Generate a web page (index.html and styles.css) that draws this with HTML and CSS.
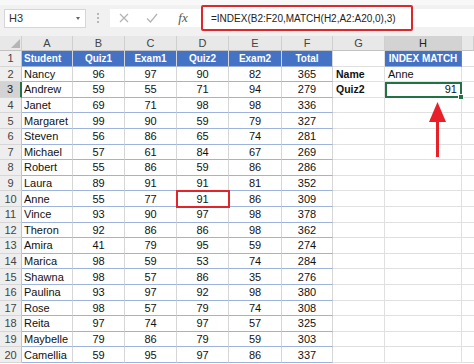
FILE: index.html
```html
<!DOCTYPE html>
<html lang="en">

<head>
    <meta charset="UTF-8">
    <meta name="viewport" content="width=device-width, initial-scale=1.0">
    <title>INDEX MATCH</title>
    <link rel="stylesheet" href="styles.css">
</head>

<body>
    <div class="toolbar">
        <div class="namebox"><span>H3</span><span class="caret"></span></div>
        <div class="grip"><i></i><i></i><i></i></div>
        <div class="fbar">
            <span class="ico">
                <svg width="10" height="10" viewBox="0 0 10 10"><path d="M1 1L9 9M9 1L1 9" stroke="#b3b3b3" stroke-width="1.2" fill="none"/></svg>
            </span>
            <span class="ico">
                <svg width="12" height="10" viewBox="0 0 12 10"><path d="M1 5.5L4.5 9L11 1" stroke="#b3b3b3" stroke-width="1.2" fill="none"/></svg>
            </span>
            <span class="ico fx">fx</span>
            <div class="formula">=INDEX(B2:F20,MATCH(H2,A2:A20,0),3)</div>
        </div>
    </div>

    <table class="sheet">
        <colgroup>
            <col style="width:22px">
            <col style="width:51px">
            <col style="width:52px">
            <col style="width:52px">
            <col style="width:52px">
            <col style="width:53px">
            <col style="width:51px">
            <col style="width:52px">
            <col style="width:77px">
            <col>
        </colgroup>
        <tr class="cols">
            <td class="corner"><svg width="9" height="9" viewBox="0 0 9 9"><polygon points="9,0 9,9 0,9" fill="#b5b5b5"/></svg></td>
            <td>A</td><td>B</td><td>C</td><td>D</td><td>E</td><td>F</td><td>G</td><td class="on">H</td><td></td>
        </tr>
        <tr class="row top">
            <td>1</td>
            <td class="hd">Student</td><td class="hd">Quiz1</td><td class="hd">Exam1</td><td class="hd">Quiz2</td><td class="hd">Exam2</td><td class="hd">Total</td>
            <td></td><td class="hd">INDEX MATCH</td><td></td>
        </tr>
        <tr class="row"><td>2</td><td>Nancy</td><td>96</td><td>97</td><td>90</td><td>82</td><td>365</td><td class="lbl">Name</td><td class="txt">Anne</td><td></td></tr>
        <tr class="row"><td class="on">3</td><td>Andrew</td><td>59</td><td>55</td><td>71</td><td>94</td><td>279</td><td class="lbl">Quiz2</td><td class="sel">91<span class="handle"></span></td><td></td></tr>
        <tr class="row"><td>4</td><td>Janet</td><td>69</td><td>71</td><td>98</td><td>98</td><td>336</td><td></td><td></td><td></td></tr>
        <tr class="row"><td>5</td><td>Margaret</td><td>99</td><td>90</td><td>59</td><td>79</td><td>327</td><td></td><td></td><td></td></tr>
        <tr class="row"><td>6</td><td>Steven</td><td>56</td><td>86</td><td>65</td><td>74</td><td>281</td><td></td><td></td><td></td></tr>
        <tr class="row"><td>7</td><td>Michael</td><td>57</td><td>61</td><td>84</td><td>67</td><td>269</td><td></td><td></td><td></td></tr>
        <tr class="row"><td>8</td><td>Robert</td><td>55</td><td>86</td><td>59</td><td>86</td><td>286</td><td></td><td></td><td></td></tr>
        <tr class="row"><td>9</td><td>Laura</td><td>89</td><td>91</td><td>91</td><td>81</td><td>352</td><td></td><td></td><td></td></tr>
        <tr class="row"><td>10</td><td>Anne</td><td>55</td><td>77</td><td class="pick">91</td><td>86</td><td>309</td><td></td><td></td><td></td></tr>
        <tr class="row"><td>11</td><td>Vince</td><td>93</td><td>90</td><td>97</td><td>98</td><td>378</td><td></td><td></td><td></td></tr>
        <tr class="row"><td>12</td><td>Theron</td><td>92</td><td>86</td><td>86</td><td>98</td><td>362</td><td></td><td></td><td></td></tr>
        <tr class="row"><td>13</td><td>Amira</td><td>41</td><td>79</td><td>95</td><td>59</td><td>274</td><td></td><td></td><td></td></tr>
        <tr class="row"><td>14</td><td>Marica</td><td>98</td><td>59</td><td>53</td><td>74</td><td>284</td><td></td><td></td><td></td></tr>
        <tr class="row"><td>15</td><td>Shawna</td><td>98</td><td>57</td><td>86</td><td>35</td><td>276</td><td></td><td></td><td></td></tr>
        <tr class="row"><td>16</td><td>Paulina</td><td>93</td><td>97</td><td>92</td><td>98</td><td>380</td><td></td><td></td><td></td></tr>
        <tr class="row"><td>17</td><td>Rose</td><td>98</td><td>57</td><td>79</td><td>74</td><td>308</td><td></td><td></td><td></td></tr>
        <tr class="row"><td>18</td><td>Reita</td><td>97</td><td>74</td><td>97</td><td>57</td><td>325</td><td></td><td></td><td></td></tr>
        <tr class="row"><td>19</td><td>Maybelle</td><td>79</td><td>86</td><td>79</td><td>59</td><td>303</td><td></td><td></td><td></td></tr>
        <tr class="row"><td>20</td><td>Camellia</td><td>59</td><td>95</td><td>97</td><td>86</td><td>337</td><td></td><td></td><td></td></tr>
    </table>

    <svg class="arrow" width="20" height="60" viewBox="0 0 20 60">
        <polygon points="9.5,2 18,22 1,22" fill="#e8202a"/>
        <rect x="8" y="21" width="3" height="36" fill="#e8202a"/>
    </svg>
</body>

</html>
```
FILE: styles.css
```css
body {
    margin: 0;
    width: 474px;
    height: 364px;
    overflow: hidden;
    position: relative;
    background: #fff;
    font-family: "Liberation Sans", Arial, sans-serif;
}

/* formula toolbar */
.toolbar {
    height: 36px;
    display: flex;
    align-items: center;
    background: linear-gradient(#f8f8f8 5px, #f1f1f1 5px);
}
.namebox {
    margin-left: 4px;
    width: 82px;
    height: 19px;
    box-sizing: border-box;
    border: 1px solid #d6d6d6;
    background: #fff;
    display: flex;
    align-items: center;
    justify-content: space-between;
    padding: 0 5px 0 4px;
    font-size: 11px;
    color: #333;
}
.caret {
    width: 0;
    height: 0;
    border-left: 2.5px solid transparent;
    border-right: 2.5px solid transparent;
    border-top: 3px solid #666;
}
.grip {
    margin-left: 11px;
    display: flex;
    flex-direction: column;
    gap: 2px;
}
.grip i {
    width: 2px;
    height: 2px;
    background: #b8b8b8;
}
.fbar {
    margin-left: 11px;
    flex: 1;
    height: 18px;
    background: #fff;
    display: flex;
    align-items: center;
}
.ico {
    width: 28px;
    flex: none;
    display: flex;
    justify-content: center;
}
.fx {
    width: 34px;
    font-family: "Liberation Serif", serif;
    font-style: italic;
    font-size: 13px;
    color: #555;
}
.formula {
    margin-left: 1px;
    width: 212px;
    height: 26px;
    flex: none;
    box-sizing: border-box;
    border: 2px solid #e0262b;
    border-radius: 2px;
    background: #fff;
    display: flex;
    align-items: center;
    padding-left: 8px;
    font-size: 10px;
    color: #222;
    white-space: nowrap;
}

/* grid */
.sheet {
    width: 474px;
    table-layout: fixed;
    border-collapse: separate;
    border-spacing: 0;
    font-size: 11px;
    color: #111;
}
.sheet td {
    padding: 0;
    text-align: center;
    vertical-align: middle;
    white-space: nowrap;
    overflow: hidden;
    border-right: 1px solid #e0e0e0;
    border-bottom: 1px solid #e0e0e0;
}
.cols {
    height: 15px;
}
.cols td {
    background: #e8e8e8;
    color: #444;
    border-right-color: #cfcfcf;
    border-bottom-color: #c2c2c2;
}
.cols td.on {
    background: #d3d3d3;
    color: #222;
}
.cols .corner {
    text-align: right;
    vertical-align: bottom;
    padding: 0 1px 2px 0;
    line-height: 0;
}
.row {
    height: 15.6px;
}
.row td:first-child {
    background: #eeeeee;
    color: #444;
    border-right-color: #c4c4c4;
    border-bottom-color: #d6d6d6;
}
.row td.on {
    background: #d3d3d3;
    color: #222;
    border-right: 2px solid #217346;
}
.row td:nth-child(n+2):nth-child(-n+7) {
    border-right-color: #d6d6d6;
    border-bottom-color: #9db2dc;
}
.row td:nth-child(2) {
    text-align: left;
    padding-left: 2px;
}
.row td:last-child {
    border-right: none;
}
.top td.hd {
    background: #4472c4;
    color: #fff;
    font-weight: bold;
    font-size: 10px;
    border-right-color: #5a82c9;
    border-bottom-color: #8ea9db;
}
.top td.hd:first-of-type {
    padding-left: 3px;
}
.lbl {
    text-align: left !important;
    padding-left: 3px !important;
    font-weight: bold;
    font-size: 10.5px;
}
.txt {
    text-align: left !important;
    padding-left: 3px !important;
}
.sel {
    position: relative;
    text-align: right !important;
    padding-right: 4px !important;
    outline: 2px solid #217346;
    outline-offset: -2px;
    overflow: visible !important;
}
.handle {
    position: absolute;
    right: -3px;
    bottom: -3px;
    width: 4px;
    height: 4px;
    background: #217346;
    border: 1px solid #fff;
}
.pick {
    outline: 2px solid #e0262b;
    outline-offset: -1px;
}

.arrow {
    position: absolute;
    left: 428px;
    top: 100px;
}
```
